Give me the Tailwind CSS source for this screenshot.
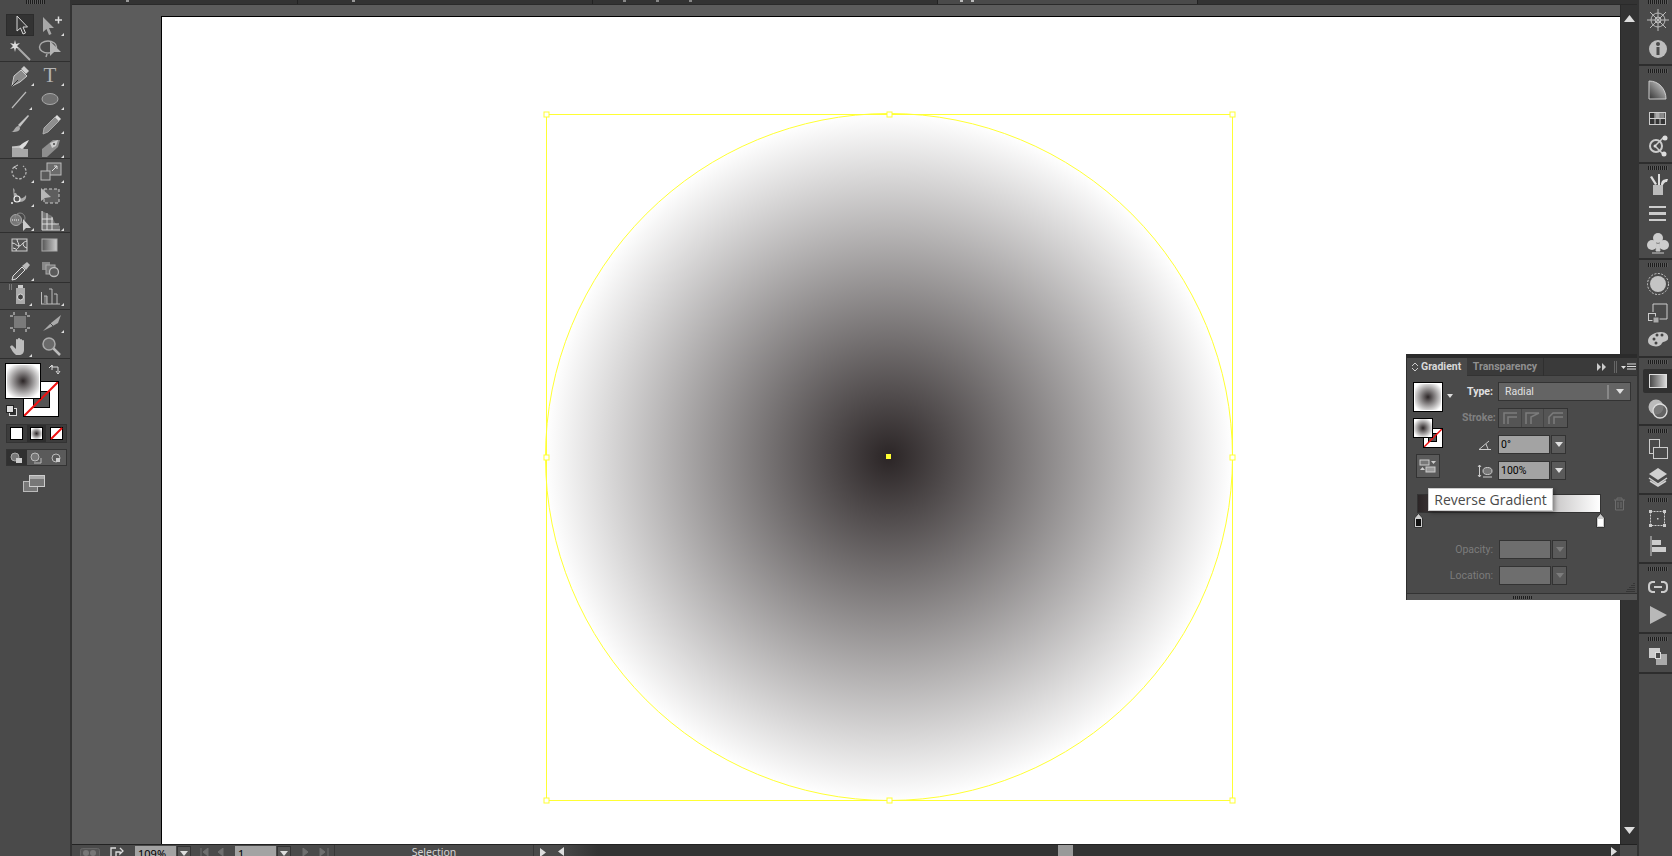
<!DOCTYPE html>
<html>
<head>
<meta charset="utf-8">
<script src="https://cdn.jsdelivr.net/npm/@tailwindcss/browser@4"></script>
</head>
<body class="w-[1672px] h-[856px] overflow-hidden bg-[#4a4a4a] relative flex font-['Noto_Sans',sans-serif]">

<!-- LEFT TOOLBAR -->
<aside class="w-[72px] h-full shrink-0 bg-[#4a4a4a] border-r-2 border-[#333] flex flex-col">
  <div class="h-[13px] flex justify-center items-start"><div class="w-[19px] h-[4px] bg-[repeating-linear-gradient(90deg,#1c1c1c_0,#1c1c1c_1px,#5a5a5a_1px,#5a5a5a_2px)]"></div></div>
  <div class="px-[5px] h-[49px] grid grid-cols-[30px_30px] auto-rows-[24px] content-start border-b border-[#2f2f2f] relative w-[70px] [&>svg]:translate-y-[1px]">
    <div class="bg-[#333] h-[22px] w-[28px] ml-px mt-px border border-[#2c2c2c] flex items-center justify-center">
      <svg width="24" height="22" viewBox="0 0 24 22"><path d="M9 2v15l3.500-3 2.500 6 2.500-1-2.500-6 4.500 0z" fill="#3a3a3a" stroke="#d8d8d8" stroke-width="1"/></svg>
    </div>
    <svg width="30" height="24"><path d="M8 3v15l3.500-3 2.500 6 2.500-1-2.500-6 5 0z" fill="#a8a8a8"/><path d="M20 6h7M23.500 2.500v7" stroke="#ddd" stroke-width="1.500"/><path d="M29 22h-3l3-3z" fill="#ddd"/></svg>
    <svg width="30" height="24"><path d="M10 2l1 4 4-1-3 3 3 3-4-1-1 4-1-4-4 1 3-3-3-3 4 1z" fill="#ddd"/><path d="M13 10l12 12" stroke="#aaa" stroke-width="2"/></svg>
    <svg width="30" height="24"><ellipse cx="13" cy="9" rx="8.500" ry="6" fill="none" stroke="#aaa" stroke-width="1.500"/><path d="M11 19l1-3" stroke="#aaa" stroke-width="1.500"/><path d="M15 3v15l4-4 7 0z" fill="#b4b4b4"/></svg>
  </div>
  <div class="px-[5px] grid grid-cols-[30px_30px] auto-rows-[24px] border-b border-[#2f2f2f] w-[70px] [&>svg]:translate-y-[2px]">
    <svg width="30" height="24"><path d="M7 22l2-10 7-6 6 6-7 6z" fill="#8a8a8a" stroke="#ccc"/><path d="M7 22l6-6" stroke="#333"/><path d="M16 5l3-3 5 5-3 3z" fill="#ccc"/><path d="M29 22h-3l3-3z" fill="#ddd"/></svg>
    <svg width="30" height="24"><text x="15" y="18" text-anchor="middle" font-family="Liberation Serif" font-size="21" fill="#b4b4b4">T</text><path d="M29 22h-3l3-3z" fill="#ddd"/></svg>
    <svg width="30" height="24"><path d="M7 20L21 4" stroke="#bbb" stroke-width="1.200"/><path d="M27 22h-3l3-3z" fill="#ddd"/></svg>
    <svg width="30" height="24"><ellipse cx="15" cy="11" rx="8" ry="5.500" fill="#707070" stroke="#a8a8a8"/><path d="M29 22h-3l3-3z" fill="#ddd"/></svg>
    <svg width="30" height="24"><path d="M13 13L23 3l1 1-9 11z" fill="#c4c4c4"/><path d="M6 20c4 0 3-6 8-6l1 2c0 4-5 4-9 4z" fill="#aaa"/></svg>
    <svg width="30" height="24"><path d="M8 22l1-6 11-11 4 4-11 11z" fill="#8e8e8e" stroke="#bbb" stroke-width=".800"/><path d="M20 5l2-2 4 4-2 2z" fill="#ddd"/><path d="M29 22h-3l3-3z" fill="#ddd"/></svg>
    <svg width="30" height="24"><path d="M7 11l9-2 3 4h4v8H7z" fill="#a8a8a8"/><path d="M14 11c3-4 7-6 10-7-2 4-4 7-7 9z" fill="#ddd"/><path d="M7 11h9" stroke="#ddd"/></svg>
    <svg width="30" height="24"><path d="M7 21v-8l11-9 7 0-2 7-11 10z" fill="#8e8e8e"/><path d="M15 7l8-3-2 6-4 2z" fill="#ccc"/><circle cx="19" cy="8" r="1" fill="#444"/><path d="M29 22h-3l3-3z" fill="#ddd"/></svg>
  </div>
  <div class="px-[5px] pt-px grid grid-cols-[30px_30px] auto-rows-[24px] border-b border-[#2f2f2f] w-[70px] [&>svg]:translate-y-[1px]">
    <svg width="30" height="24"><path d="M9 6A7 7 0 1 0 18 5" fill="none" stroke="#b4b4b4" stroke-width="1.300" stroke-dasharray="2.500 1.500"/><path d="M13 4l-4 2 3 2" fill="none" stroke="#ccc"/><path d="M29 22h-3l3-3z" fill="#ddd"/></svg>
    <svg width="30" height="24"><rect x="12" y="2" width="14" height="12" fill="#6b6b6b" stroke="#bbb"/><rect x="6" y="10" width="9" height="9" fill="#5a5a5a" stroke="#bbb"/><path d="M17 10l5-5M19 5h3v3" stroke="#ddd" fill="none"/><path d="M29 22h-3l3-3z" fill="#ddd"/></svg>
    <svg width="30" height="24"><path d="M8 3c2 1 2 3 1 5 3-1 3 3 5 5 2 1 5 0 7-3 1 4-2 7-6 7-3 0-5-2-6-4" fill="#aaa"/><circle cx="12" cy="14" r="3" fill="#555" stroke="#eee" stroke-width="1.200"/><circle cx="7" cy="18" r="1" fill="#eee"/><path d="M29 22h-3l3-3z" fill="#ddd"/></svg>
    <svg width="30" height="24"><rect x="9" y="4" width="15" height="14" fill="#5e5e5e" stroke="#ccc" stroke-dasharray="3 2"/><path d="M6 3v13l4-3 6-1z" fill="#b8b8b8"/></svg>
    <svg width="30" height="24"><circle cx="11" cy="11" r="5.500" fill="#777" stroke="#aaa"/><circle cx="15" cy="9" r="5" fill="none" stroke="#888"/><path d="M7 11h8" stroke="#eee" stroke-dasharray="1 1"/><path d="M18 10v12l3-3 5 0z" fill="#ccc"/><path d="M29 22h-3l3-3z" fill="#ddd"/></svg>
    <svg width="30" height="24"><path d="M7 2l10 5 3 7 5 3v4H7z" fill="#777"/><path d="M7 2v19h18M12 4v17M17 8v13M7 10h11M7 15h17" stroke="#ddd" fill="none"/><path d="M29 22h-3l3-3z" fill="#ddd"/></svg>
  </div>
  <div class="px-[5px] pt-px grid grid-cols-[30px_30px] auto-rows-[24px] border-b border-[#2f2f2f] w-[70px] [&>svg]:translate-y-[1px]">
    <svg width="30" height="24"><rect x="7" y="4" width="15" height="12" fill="#555" stroke="#ccc"/><path d="M7 8c4 0 4 3 7 3s3-4 8-5M12 4c0 3 2 4 2 7s-3 2-3 5M18 8c0 3 1 4 4 5M8 13l3 1" stroke="#ddd" fill="none"/></svg>
    <svg width="30" height="24"><defs><linearGradient id="g1"><stop offset="0" stop-color="#555"/><stop offset="1" stop-color="#ccc"/></linearGradient></defs><rect x="7" y="4" width="15" height="12" fill="url(#g1)" stroke="#aaa"/></svg>
    <svg width="30" height="24"><path d="M7 21l1-4 9-9 3 3-9 9z" fill="#555" stroke="#ddd"/><path d="M17 7l5-4 3 3-4 5z" fill="#bbb"/><path d="M29 22h-3l3-3z" fill="#ddd"/></svg>
    <svg width="30" height="24"><rect x="7" y="3" width="8" height="8" fill="#888"/><rect x="11" y="6" width="9" height="9" fill="#777" stroke="#aaa"/><circle cx="19" cy="13" r="4.500" fill="#5a5a5a" stroke="#bbb" stroke-width="1.300"/></svg>
  </div>
  <div class="px-[5px] pt-px h-[27px] grid grid-cols-[30px_30px] auto-rows-[24px] border-b border-[#2f2f2f] w-[70px]">
    <svg width="30" height="24"><path d="M4 3h3M4 5h3M4 1h3" stroke="#aaa" stroke-dasharray="1 1"/><rect x="11" y="4" width="9" height="16" fill="#aaa"/><rect x="13" y="1" width="5" height="3" fill="#ccc"/><circle cx="15.500" cy="13" r="3" fill="#444" stroke="#ddd"/><path d="M27 22h-3l3-3z" fill="#ddd"/></svg>
    <svg width="30" height="24"><path d="M6.500 20V8M6 20h19" stroke="#bbb"/><rect x="9" y="12" width="3" height="8" fill="#777"/><path d="M9 12h3v8M14 5h3v15M19 10h3v10" fill="none" stroke="#bbb"/><path d="M29 22h-3l3-3z" fill="#ddd"/></svg>
  </div>
  <div class="px-[5px] h-[49px] grid grid-cols-[30px_30px] auto-rows-[24px] border-b border-[#2f2f2f] w-[70px] [&>svg]:translate-y-[1px]">
    <svg width="30" height="24"><rect x="9" y="5" width="12" height="12" fill="#7a7a7a"/><path d="M5 5h3M22 5h3M5 17h3M22 17h3M9 1v3M21 1v3M9 18v3M21 18v3" stroke="#ddd"/></svg>
    <svg width="30" height="24"><path d="M8 20l8-8 10-8-3 8-7 4z" fill="#aaa"/><path d="M15 12l4 4" stroke="#4a4a4a"/><path d="M29 22h-3l3-3z" fill="#ddd"/></svg>
    <svg width="30" height="24"><path d="M8 11l3 3V5c0-1.500 2-1.500 2 0v-1c0-1.500 2-1.500 2 0v1c0-1.500 2-1.500 2 0v1c0-1.500 2-1.500 2 0v9c0 3-2 5-5 5h-3c-3-2-4-5-6-8 0-1 2-2 3-1z" fill="#bdbdbd"/><path d="M27 22h-3l3-3z" fill="#ddd"/></svg>
    <svg width="30" height="24"><circle cx="14" cy="9" r="6" fill="#6a6a6a" stroke="#aaa" stroke-width="1.500"/><path d="M18.500 13.500L25 20" stroke="#bbb" stroke-width="2.500"/></svg>
  </div>
  <!-- fill & stroke -->
  <div class="relative h-[65px] w-[70px]">
    <div class="absolute left-[23px] top-[22px] w-[36px] h-[36px] bg-white border border-black flex items-center justify-center">
      <div class="w-[17px] h-[17px] bg-[#555] border border-black"></div>
      <svg class="absolute inset-0" width="34" height="34"><path d="M0 34L34 0" stroke="#f01010" stroke-width="2"/></svg>
    </div>
    <div class="absolute left-[5px] top-[4px] w-[36px] h-[36px] border border-black bg-[radial-gradient(circle_closest-side,#2b2526,#ffffff_115%)] outline outline-white -outline-offset-2"></div>
    <svg class="absolute left-[47px] top-[3px]" width="14" height="14"><path d="M2 6l3-3v2h6v5M9 9l2 3 2-3M5 3v5" fill="none" stroke="#ddd"/></svg>
    <svg class="absolute left-[5px] top-[45px]" width="13" height="13"><rect x="4.500" y="4.500" width="7" height="7" fill="#333" stroke="#ddd"/><rect x="1.500" y="1.500" width="7" height="7" fill="#ddd" stroke="#222"/></svg>
  </div>
  <div class="ml-[6px] w-[61px] h-[19px] bg-[#3c3c3c] border border-[#333] grid grid-cols-3">
    <div class="flex items-center justify-center"><div class="w-[13px] h-[13px] bg-white border border-black"></div></div>
    <div class="flex items-center justify-center bg-[#2e2e2e]"><div class="w-[13px] h-[13px] border border-black bg-[radial-gradient(circle_closest-side,#2b2526,#ffffff_115%)]"></div></div>
    <div class="flex items-center justify-center"><svg width="13" height="13"><rect x=".5" y=".5" width="12" height="12" fill="#fff" stroke="#000"/><path d="M1 12L12 1" stroke="#f01010" stroke-width="2"/></svg></div>
  </div>
  <div class="ml-[6px] mt-[6px] w-[61px] h-[17px] bg-[#5a5a5a] border border-[#333] grid grid-cols-3">
    <div class="flex items-center justify-center bg-[#303030]"><svg width="14" height="12"><circle cx="5" cy="5" r="4" fill="#777" stroke="#aaa"/><rect x="6" y="6" width="6" height="5" fill="#ccc"/></svg></div>
    <div class="flex items-center justify-center"><svg width="14" height="12"><circle cx="6" cy="5" r="4" fill="#777" stroke="#bbb"/><path d="M12 6v5H5" fill="none" stroke="#bbb"/></svg></div>
    <div class="flex items-center justify-center"><svg width="14" height="12"><circle cx="7" cy="6" r="4" fill="none" stroke="#bbb"/><rect x="7" y="6" width="4" height="4" fill="#ccc"/></svg></div>
  </div>
  <div class="mt-[9px] ml-[23px]">
    <svg width="22" height="17"><rect x=".5" y="6.500" width="14" height="10" fill="#777" stroke="#bbb"/><rect x="6.500" y=".5" width="15" height="11" fill="#777" stroke="#ccc"/><rect x="7" y="1" width="14" height="3" fill="#aaa"/></svg>
  </div>
</aside>

<!-- CENTER -->
<main class="w-[1565px] h-full shrink-0 flex flex-col">
  <div class="h-[5px] bg-[#333] border-b border-[#2a2a2a] flex shrink-0 overflow-hidden">
    <div class="w-[226px] border-r border-[#222] pl-[54px]"><div class="w-[3px] h-[2px] bg-[#999]"></div></div>
    <div class="w-[295px] border-r border-[#222] pl-[54px]"><div class="w-[3px] h-[2px] bg-[#999]"></div></div>
    <div class="w-[345px] border-r border-[#222] pl-[30px] flex gap-[30px]"><div class="w-[3px] h-[2px] bg-[#888]"></div><div class="w-[3px] h-[2px] bg-[#888]"></div><div class="w-[3px] h-[2px] bg-[#888]"></div></div>
    <div class="w-[260px] bg-[#4a4a4a] border-r border-[#222] pl-[22px] flex gap-[8px]"><div class="w-[3px] h-[2px] bg-[#bbb]"></div><div class="w-[3px] h-[2px] bg-[#bbb]"></div></div>
  </div>
  <div class="flex-1 min-h-0 flex">
    <div class="w-[1548px] flex flex-col bg-[#5c5c5c]">
      <div class="h-[11px] shrink-0"></div>
      <div class="flex-1 ml-[89px] bg-white border-t border-l border-black relative">
        <svg class="absolute -left-px -top-px" width="1459" height="829" viewBox="161 16 1459 829">
          <defs>
            <radialGradient id="rg" gradientUnits="userSpaceOnUse" cx="889" cy="457" r="344">
              <stop offset="0" stop-color="#2b2526"/>
              <stop offset="1" stop-color="#ffffff"/>
            </radialGradient>
          </defs>
          <circle cx="889" cy="457" r="343.500" fill="url(#rg)" stroke="#ffff33" stroke-width="1"/>
          <rect x="546.500" y="114.500" width="686" height="686" fill="none" stroke="#ffff33" stroke-width="1"/>
          <g fill="#fff" stroke="#ffff33">
            <rect x="544" y="112" width="5" height="5"/><rect x="887" y="112" width="5" height="5"/><rect x="1230" y="112" width="5" height="5"/>
            <rect x="544" y="455" width="5" height="5"/><rect x="1230" y="455" width="5" height="5"/>
            <rect x="544" y="798" width="5" height="5"/><rect x="887" y="798" width="5" height="5"/><rect x="1230" y="798" width="5" height="5"/>
          </g>
          <rect x="886" y="454" width="5" height="5" fill="#ffff33"/>
        </svg>
      </div>
    </div>
    <div class="w-[17px] bg-[#333] border-l border-[#2a2a2a] flex flex-col items-center justify-between py-[10px]">
      <svg width="11" height="7"><path d="M0 7h11L5.500 0z" fill="#ddd"/></svg>
      <svg width="11" height="7"><path d="M0 0h11L5.500 7z" fill="#ddd"/></svg>
    </div>
  </div>
  <!-- status bar -->
  <div class="h-[12px] shrink-0 border-t border-[#222] bg-[#4a4a4a] flex items-start text-[11px] leading-[15px] overflow-hidden">
    <div class="w-[262px] h-[16px] flex items-start shrink-0">
      <svg class="ml-[8px] mt-[3px]" width="20" height="10"><rect x=".5" y=".5" width="19" height="9" rx="2" fill="#555" stroke="#666"/><circle cx="6" cy="5" r="3" fill="#777"/><circle cx="13" cy="5" r="3" fill="#777"/></svg>
      <svg class="ml-[10px] mt-[2px]" width="14" height="10"><path d="M1 9V1h5M10 1l3 3-3 3V5H6v4" fill="none" stroke="#ddd" stroke-width="1.300"/></svg>
      <div class="ml-[11px] w-[41px] h-[15px] bg-[#a3a3a3] text-black pl-[3px] mt-px">109%</div>
      <div class="ml-px w-[14px] h-[15px] mt-px bg-[#555] border border-[#333] flex justify-center pt-[4px]"><svg width="8" height="5"><path d="M0 0h8L4 5z" fill="#ddd"/></svg></div>
      <svg class="ml-[9px] mt-[3px]" width="34" height="8"><path d="M1 0v8M8 0L3 4l5 4zM23 0l-5 4 5 4z" fill="#6f6f6f" stroke="#6f6f6f"/></svg>
      <div class="ml-px w-[41px] h-[15px] mt-px bg-[#a3a3a3] text-black pl-[3px]">1</div>
      <div class="ml-px w-[14px] h-[15px] mt-px bg-[#555] border border-[#333] flex justify-center pt-[4px]"><svg width="8" height="5"><path d="M0 0h8L4 5z" fill="#ddd"/></svg></div>
      <svg class="ml-[9px] mt-[3px]" width="34" height="8"><path d="M3 0l5 4-5 4zM20 0l5 4-5 4zM28 0v8" fill="#6f6f6f" stroke="#6f6f6f"/></svg>
    </div>
    <div class="w-[200px] shrink-0 border-l border-r border-[#383838] text-center text-[#d4d4d4] text-[10.500px]">Selection</div>
    <div class="w-[24px] shrink-0 pl-[6px] pt-[3px]"><svg width="6" height="9"><path d="M0 0l6 4.500L0 9z" fill="#ddd"/></svg></div>
    <div class="flex-1 h-[12px] bg-[linear-gradient(90deg,#4a4a4a,#333_40px)] relative flex">
      <svg class="mt-[2px] shrink-0" width="8" height="9"><path d="M6 0L0 4.500 6 9z" fill="#ddd"/></svg>
      <div class="ml-[492px] w-[15px] h-[12px] bg-[#999] shrink-0"></div>
      <svg class="ml-auto mr-[3px] mt-[2px] shrink-0" width="6" height="9"><path d="M0 0l6 4.500L0 9z" fill="#ddd"/></svg>
    </div>
    <div class="w-[17px] h-[12px] shrink-0 bg-[#4a4a4a]"></div>
  </div>
</main>

<!-- RIGHT DOCK -->
<aside class="w-[35px] h-full shrink-0 border-l-2 border-[#333] bg-[#4a4a4a] flex flex-col text-[#c4c4c4]">
  <div class="h-[66px] border-b-2 border-[#2d2d2d] flex flex-col pl-[7px]">
    <div class="ml-[2px] w-[20px] bg-[repeating-linear-gradient(90deg,#1c1c1c_0,#1c1c1c_1px,#5a5a5a_1px,#5a5a5a_2px)] shrink-0 mb-[2px] h-[4px]"></div>
    <svg class="mt-[2px]" width="24" height="24"><circle cx="12" cy="12" r="7" fill="none" stroke="#bbb"/><circle cx="12" cy="12" r="3" fill="none" stroke="#bbb"/><path d="M12 1v22M1 12h22M4 4l16 16M20 4L4 20" stroke="#bbb"/></svg>
    <svg class="mt-[5px]" width="24" height="24"><circle cx="12" cy="12" r="9" fill="#bdbdbd"/><rect x="10.500" y="10" width="3" height="8" fill="#4a4a4a"/><circle cx="12" cy="7" r="2" fill="#4a4a4a"/></svg>
  </div>
  <div class="h-[98px] border-b-2 border-[#2d2d2d] flex flex-col pl-[7px]">
    <div class="mt-[3px] ml-[2px] w-[20px] h-[4px] bg-[repeating-linear-gradient(90deg,#1c1c1c_0,#1c1c1c_1px,#5a5a5a_1px,#5a5a5a_2px)] shrink-0"></div>
    <svg class="mt-[6px]" width="24" height="24"><defs><linearGradient id="g2" x1="0" y1="1" x2="1" y2="0"><stop offset="0" stop-color="#333"/><stop offset="1" stop-color="#ddd"/></linearGradient></defs><path d="M3 2v18h17C20 10 13 2 3 2z" fill="url(#g2)" stroke="#ccc"/></svg>
    <svg class="mt-[4px]" width="24" height="24"><rect x="3.500" y="5.500" width="16" height="12" fill="#333" stroke="#ccc"/><path d="M3 11.500h16M9 5v12M14 5v12" stroke="#ccc"/><rect x="9.500" y="6" width="4" height="5" fill="#aaa"/><rect x="14.500" y="6" width="4" height="5" fill="#888"/></svg>
    <svg class="mt-[3px]" width="24" height="24"><circle cx="10" cy="12" r="6" fill="none" stroke="#ccc" stroke-width="2"/><path d="M9 12L18 3M9 12l9 9" stroke="#ccc" stroke-width="1.500"/><circle cx="19" cy="4" r="2.500" fill="#ddd"/><circle cx="18" cy="20" r="2.500" fill="#ddd"/><circle cx="9" cy="12" r="1.500" fill="#ddd"/></svg>
  </div>
  <div class="h-[96px] border-b-2 border-[#2d2d2d] flex flex-col pl-[7px]">
    <div class="mt-[2px] ml-[2px] w-[20px] h-[4px] bg-[repeating-linear-gradient(90deg,#1c1c1c_0,#1c1c1c_1px,#5a5a5a_1px,#5a5a5a_2px)] shrink-0"></div>
    <svg class="mt-[3px]" width="24" height="24"><rect x="7" y="12" width="10" height="10" fill="#bbb"/><path d="M9 12L4 4l2-1 5 8zM12 12V1h2v11zM15 12c0-4 2-6 7-6l-1 3c-3 0-3 2-4 3z" fill="#ddd"/></svg>
    <svg class="mt-[4px]" width="24" height="24"><rect x="3" y="5" width="17" height="2" fill="#ccc"/><rect x="3" y="11" width="17" height="3" fill="#ccc"/><rect x="3" y="18" width="17" height="2" fill="#ccc"/></svg>
    <svg class="mt-[7px]" width="24" height="24"><circle cx="12" cy="6" r="5" fill="#ccc"/><circle cx="6" cy="13" r="5" fill="#ccc"/><circle cx="18" cy="13" r="5" fill="#ccc"/><path d="M11 12h2l1 7h-4zM6 21h12" stroke="#ccc" fill="#ccc"/></svg>
  </div>
  <div class="h-[98px] border-b-2 border-[#2d2d2d] flex flex-col pl-[7px]">
    <div class="mt-[3px] ml-[2px] w-[20px] h-[4px] bg-[repeating-linear-gradient(90deg,#1c1c1c_0,#1c1c1c_1px,#5a5a5a_1px,#5a5a5a_2px)] shrink-0"></div>
    <svg class="mt-[5px]" width="24" height="24"><circle cx="12" cy="12" r="8" fill="#c4c4c4"/><circle cx="12" cy="12" r="10.500" fill="none" stroke="#ccc" stroke-dasharray="2 1.500"/></svg>
    <svg class="mt-[5px]" width="24" height="24"><path d="M7 3h14v15H12" fill="none" stroke="#ccc"/><path d="M7 3v8" stroke="#ccc"/><rect x="2.500" y="12.500" width="7" height="7" fill="none" stroke="#ccc"/><rect x="7" y="16" width="6" height="6" fill="#aaa" stroke="#444"/></svg>
    <svg class="mt-[1px]" width="24" height="24"><path d="M2 15c0-6 8-9 13-9 5 0 8 3 7 7-1 3-5 2-6 4-1 3-5 4-9 3-3-1-5-2-5-5z" fill="#c4c4c4"/><circle cx="8" cy="13" r="1.500" fill="#444"/><circle cx="11" cy="9" r="1.500" fill="#444"/><circle cx="16" cy="9" r="1.500" fill="#444"/><circle cx="10" cy="17" r="1.500" fill="#444"/></svg>
  </div>
  <div class="h-[68px] border-b-2 border-[#2d2d2d] flex flex-col">
    <div class="mt-[2px] ml-[9px] w-[20px] h-[4px] bg-[repeating-linear-gradient(90deg,#1c1c1c_0,#1c1c1c_1px,#5a5a5a_1px,#5a5a5a_2px)] shrink-0"></div>
    <div class="mt-[5px] ml-[4px] h-[24px] bg-[#303030] rounded-l-[2px] pl-[3px] shrink-0 flex items-center">
      <svg width="24" height="24"><defs><linearGradient id="g3"><stop offset="0" stop-color="#444"/><stop offset="1" stop-color="#ddd"/></linearGradient></defs><rect x="3.500" y="5.500" width="17" height="13" fill="url(#g3)" stroke="#ddd"/></svg>
    </div>
    <svg class="mt-[4px] ml-[7px]" width="24" height="24"><circle cx="10" cy="10" r="7.500" fill="#bbb"/><circle cx="14" cy="14" r="7" fill="#6a6a6a" fill-opacity=".8" stroke="#ddd" stroke-width="1.300"/></svg>
  </div>
  <div class="h-[69px] border-b-2 border-[#2d2d2d] flex flex-col pl-[7px]">
    <div class="mt-[3px] ml-[2px] w-[20px] h-[4px] bg-[repeating-linear-gradient(90deg,#1c1c1c_0,#1c1c1c_1px,#5a5a5a_1px,#5a5a5a_2px)] shrink-0"></div>
    <svg class="mt-[5px]" width="24" height="24"><rect x="3.500" y="1.500" width="10" height="14" fill="none" stroke="#ccc"/><rect x="7.500" y="9.500" width="14" height="11" fill="#4a4a4a" stroke="#ccc"/></svg>
    <svg class="mt-[3px]" width="24" height="24"><path d="M12 3l9 6-9 6-9-6z" fill="#d0d0d0"/><path d="M3 13l9 6 9-6M4 16l8 5 8-5" fill="none" stroke="#d0d0d0" stroke-width="1.500"/></svg>
  </div>
  <div class="h-[69px] border-b-2 border-[#2d2d2d] flex flex-col pl-[7px]">
    <div class="mt-[3px] ml-[2px] w-[20px] h-[4px] bg-[repeating-linear-gradient(90deg,#1c1c1c_0,#1c1c1c_1px,#5a5a5a_1px,#5a5a5a_2px)] shrink-0"></div>
    <svg class="mt-[5px]" width="24" height="24"><rect x="4.500" y="4.500" width="14" height="14" fill="none" stroke="#ccc" stroke-dasharray="2 1" /><rect x="3" y="3" width="3" height="3" fill="#ccc"/><rect x="17" y="3" width="3" height="3" fill="#ccc"/><rect x="3" y="17" width="3" height="3" fill="#ccc"/><rect x="17" y="17" width="3" height="3" fill="#ccc"/><rect x="11" y="11" width="1.500" height="1.500" fill="#ccc"/></svg>
    <svg class="mt-[3px]" width="24" height="24"><path d="M5 2v20" stroke="#ccc"/><rect x="6" y="6" width="9" height="5" fill="#ccc"/><rect x="6" y="13" width="14" height="5" fill="#ccc"/></svg>
  </div>
  <div class="h-[70px] border-b-2 border-[#2d2d2d] flex flex-col pl-[7px]">
    <div class="mt-[3px] ml-[2px] w-[20px] h-[4px] bg-[repeating-linear-gradient(90deg,#1c1c1c_0,#1c1c1c_1px,#5a5a5a_1px,#5a5a5a_2px)] shrink-0"></div>
    <svg class="mt-[4px]" width="24" height="24"><path d="M9 7H6a4 4 0 0 0-3 4v2a4 4 0 0 0 3 4h3M15 7h3a4 4 0 0 1 3 4v2a4 4 0 0 1-3 4h-3M8 12h8" fill="none" stroke="#ccc" stroke-width="2"/></svg>
    <svg class="mt-[4px]" width="24" height="24"><path d="M4 3l17 9-17 9z" fill="#b8b8b8"/></svg>
  </div>
  <div class="h-[40px] border-b-2 border-[#2d2d2d] flex flex-col pl-[7px]">
    <div class="mt-[3px] ml-[2px] w-[20px] h-[4px] bg-[repeating-linear-gradient(90deg,#1c1c1c_0,#1c1c1c_1px,#5a5a5a_1px,#5a5a5a_2px)] shrink-0"></div>
    <svg class="mt-[3px]" width="24" height="24"><rect x="3" y="4" width="11" height="10" fill="#ccc"/><rect x="10" y="10" width="11" height="11" fill="#aaa"/><rect x="9.500" y="8.500" width="5" height="6" fill="#4a4a4a" stroke="#ddd"/></svg>
  </div>
</aside>

<!-- GRADIENT PANEL -->
<section class="absolute left-[1406px] top-[354px] w-[231px] h-[246px] bg-[#4a4a4a] flex flex-col text-[10.500px] leading-[14px] text-[#e0e0e0] border-l border-[#2d2d2d] font-['Roboto',sans-serif]">
  <div class="h-[4px] bg-[#2b2b2b] shrink-0"></div>
  <div class="h-[18px] bg-[#3a3a3a] flex items-center shrink-0 border-b border-[#333]">
    <div class="w-[60px] h-[18px] bg-[#4a4a4a] flex items-center gap-[3px] pl-[5px] font-bold text-[#d8d8d8]">
      <svg width="6" height="10"><path d="M0 4l3-3 3 3M0 6l3 3 3-3" fill="none" stroke="#ccc"/></svg>Gradient
    </div>
    <div class="w-[77px] h-[18px] border-r border-[#2f2f2f] text-center font-bold text-[#909090] leading-[18px]">Transparency</div>
    <svg class="ml-[53px]" width="10" height="8"><path d="M0 0l4 4-4 4zM5 0l4 4-4 4z" fill="#ccc"/></svg>
    <div class="ml-[7px] w-[3px] h-[12px] border-x border-[#666]"></div>
    <svg class="ml-[4px]" width="16" height="8"><path d="M0 3h5L2.500 6z" fill="#ddd"/><path d="M6 1h9M6 3.500h9M6 6h9" stroke="#ddd"/></svg>
  </div>
  <div class="flex-1 flex flex-col relative">
    <div class="flex pt-[6px] pl-[6px]">
      <div class="w-[49px] shrink-0 relative h-[96px]">
        <div class="w-[30px] h-[30px] border border-black outline outline-white -outline-offset-2 bg-[radial-gradient(circle_closest-side,#2b2526,#ffffff_115%)]"></div>
        <svg class="absolute left-[34px] top-[12px]" width="6" height="4"><path d="M0 0h6L3 4z" fill="#ddd"/></svg>
        <div class="absolute left-[10px] top-[46px] w-[20px] h-[20px] bg-white border border-black flex items-center justify-center">
          <svg width="18" height="18"><rect x="4.500" y="4.500" width="8" height="8" fill="#555" stroke="#000"/><path d="M0 18L18 0" stroke="#f01010" stroke-width="1.500"/></svg>
        </div>
        <div class="absolute left-0 top-[36px] w-[20px] h-[20px] border border-black bg-[radial-gradient(circle_closest-side,#2b2526,#ffffff_115%)]"></div>
        <div class="absolute left-[3px] top-[72px] w-[24px] h-[24px] bg-[#5a5a5a] border border-[#333] flex items-center justify-center">
          <svg width="18" height="14"><rect x="1" y="1" width="9" height="5" fill="#777" stroke="#ccc"/><path d="M12 2h5l-2.500 3z" fill="#ccc"/><path d="M1 11h5L3.500 8z" fill="#ccc"/><rect x="7" y="8" width="9" height="5" fill="#999" stroke="#ccc"/></svg>
        </div>
      </div>
      <div class="flex-1 flex flex-col">
        <div class="h-[19px] flex items-center mb-[7px]">
          <div class="w-[31px] text-right font-bold mr-[5px] shrink-0">Type:</div>
          <div class="w-[133px] h-[19px] bg-[#646464] border border-[#333] flex items-center pl-[6px]">Radial
            <div class="ml-auto h-[14px] w-[2px] border-x border-[#888] mr-[7px]"></div>
            <svg class="mr-[6px]" width="8" height="5"><path d="M0 0h8L4 5z" fill="#e0e0e0"/></svg>
          </div>
        </div>
        <div class="h-[20px] flex items-center mb-[7px]">
          <div class="w-[31px] text-right font-bold mr-[5px] shrink-0 text-[#808080]">Stroke:</div>
          <div class="w-[70px] h-[20px] bg-[#555] border border-[#333] grid grid-cols-3">
            <div class="border-r border-[#444] flex items-center justify-center"><svg width="16" height="14"><path d="M2 13V2h13M6 13V6h9" fill="none" stroke="#7c7c7c" stroke-width="1.500"/></svg></div>
            <div class="border-r border-[#444] flex items-center justify-center"><svg width="16" height="14"><path d="M2 13V2h13M7 13V6l8-4" fill="none" stroke="#7c7c7c" stroke-width="1.500"/></svg></div>
            <div class="flex items-center justify-center"><svg width="16" height="14"><path d="M1 13V6l4-4h10M6 13V6h9" fill="none" stroke="#7c7c7c" stroke-width="1.500"/></svg></div>
          </div>
        </div>
        <div class="h-[19px] flex items-center mb-[7px]">
          <div class="w-[31px] mr-[5px] shrink-0 flex justify-end pr-[1px]"><svg width="14" height="12"><path d="M1 10.500h12M1 10.500L11 2" fill="none" stroke="#ccc"/><path d="M8 5l2 5" stroke="#ccc"/></svg></div>
          <div class="w-[52px] h-[19px] bg-[#a3a3a3] border border-[#333] pl-[2px] text-black leading-[17px]">0°</div>
          <div class="ml-px w-[15px] h-[19px] bg-[#5a5a5a] border border-[#333] flex items-center justify-center"><svg width="8" height="5"><path d="M0 0h8L4 5z" fill="#e0e0e0"/></svg></div>
        </div>
        <div class="h-[19px] flex items-center">
          <div class="w-[31px] mr-[5px] shrink-0 flex justify-end"><svg width="16" height="14"><path d="M2.500 1v12M1 3l1.500-2L4 3M1 11l1.500 2L4 11" fill="none" stroke="#ccc"/><ellipse cx="10.500" cy="7" rx="4.500" ry="3.500" fill="#777" stroke="#ccc"/><path d="M6 13h9" stroke="#ccc"/></svg></div>
          <div class="w-[52px] h-[19px] bg-[#a3a3a3] border border-[#333] pl-[2px] text-black leading-[17px]">100%</div>
          <div class="ml-px w-[15px] h-[19px] bg-[#5a5a5a] border border-[#333] flex items-center justify-center"><svg width="8" height="5"><path d="M0 0h8L4 5z" fill="#e0e0e0"/></svg></div>
        </div>
      </div>
    </div>
    <div class="relative ml-[10px] mt-[14px] w-[184px] h-[19px] border border-[#333] bg-[linear-gradient(90deg,#2b2526,#ffffff)]">
      <svg class="absolute -left-[4px] top-[18px]" width="9" height="15"><path d="M.5 5L4.500.5 8.500 5v9.500h-8z" fill="#ccc" stroke="#333"/><rect x="2" y="6" width="5" height="7" fill="#111"/></svg>
      <svg class="absolute -right-[5px] top-[18px]" width="9" height="15"><path d="M.5 5L4.500.5 8.500 5v9.500h-8z" fill="#ccc" stroke="#333"/><rect x="2" y="6" width="5" height="7" fill="#fff"/></svg>
      <svg class="absolute left-[195px] top-[2px]" width="13" height="14"><path d="M1 3h11M4 3V1h5v2M2.500 3v10h8V3M5 5v6M8 5v6" fill="none" stroke="#6c6c6c"/></svg>
    </div>
    <div class="flex items-center h-[19px] mt-[27px]">
      <div class="w-[87px] text-right pr-px text-[#7c7c7c] mr-[5px]">Opacity:</div>
      <div class="w-[52px] h-[19px] bg-[#6e6e6e] border border-[#333]"></div>
      <div class="ml-px w-[15px] h-[19px] bg-[#5a5a5a] border border-[#333] flex items-center justify-center"><svg width="8" height="5"><path d="M0 0h8L4 5z" fill="#7c7c7c"/></svg></div>
    </div>
    <div class="flex items-center h-[19px] mt-[7px]">
      <div class="w-[87px] text-right pr-px text-[#7c7c7c] mr-[5px]">Location:</div>
      <div class="w-[52px] h-[19px] bg-[#6e6e6e] border border-[#333]"></div>
      <div class="ml-px w-[15px] h-[19px] bg-[#5a5a5a] border border-[#333] flex items-center justify-center"><svg width="8" height="5"><path d="M0 0h8L4 5z" fill="#7c7c7c"/></svg></div>
    </div>
    <svg class="absolute right-[2px] bottom-[1px]" width="9" height="9"><path d="M8 0v9M6 2v7M4 4v5M2 6v3M0 8v1" stroke="#222" stroke-dasharray="1 1"/></svg>
    <div class="absolute left-[21px] top-[112px] w-[125px] h-[23px] bg-white border border-[#ccc] shadow-[2px_2px_4px_rgba(0,0,0,.35)] text-[#4a4a4a] text-[14px] leading-[21px] text-center font-['Open_Sans',sans-serif] whitespace-nowrap">Reverse Gradient</div>
  </div>
  <div class="h-[7px] shrink-0 bg-[#555] border-t border-[#333] flex justify-center items-center">
    <div class="w-[19px] h-[3px] bg-[repeating-linear-gradient(90deg,#1c1c1c_0,#1c1c1c_1px,#5a5a5a_1px,#5a5a5a_2px)]"></div>
  </div>
</section>
</body>
</html>
